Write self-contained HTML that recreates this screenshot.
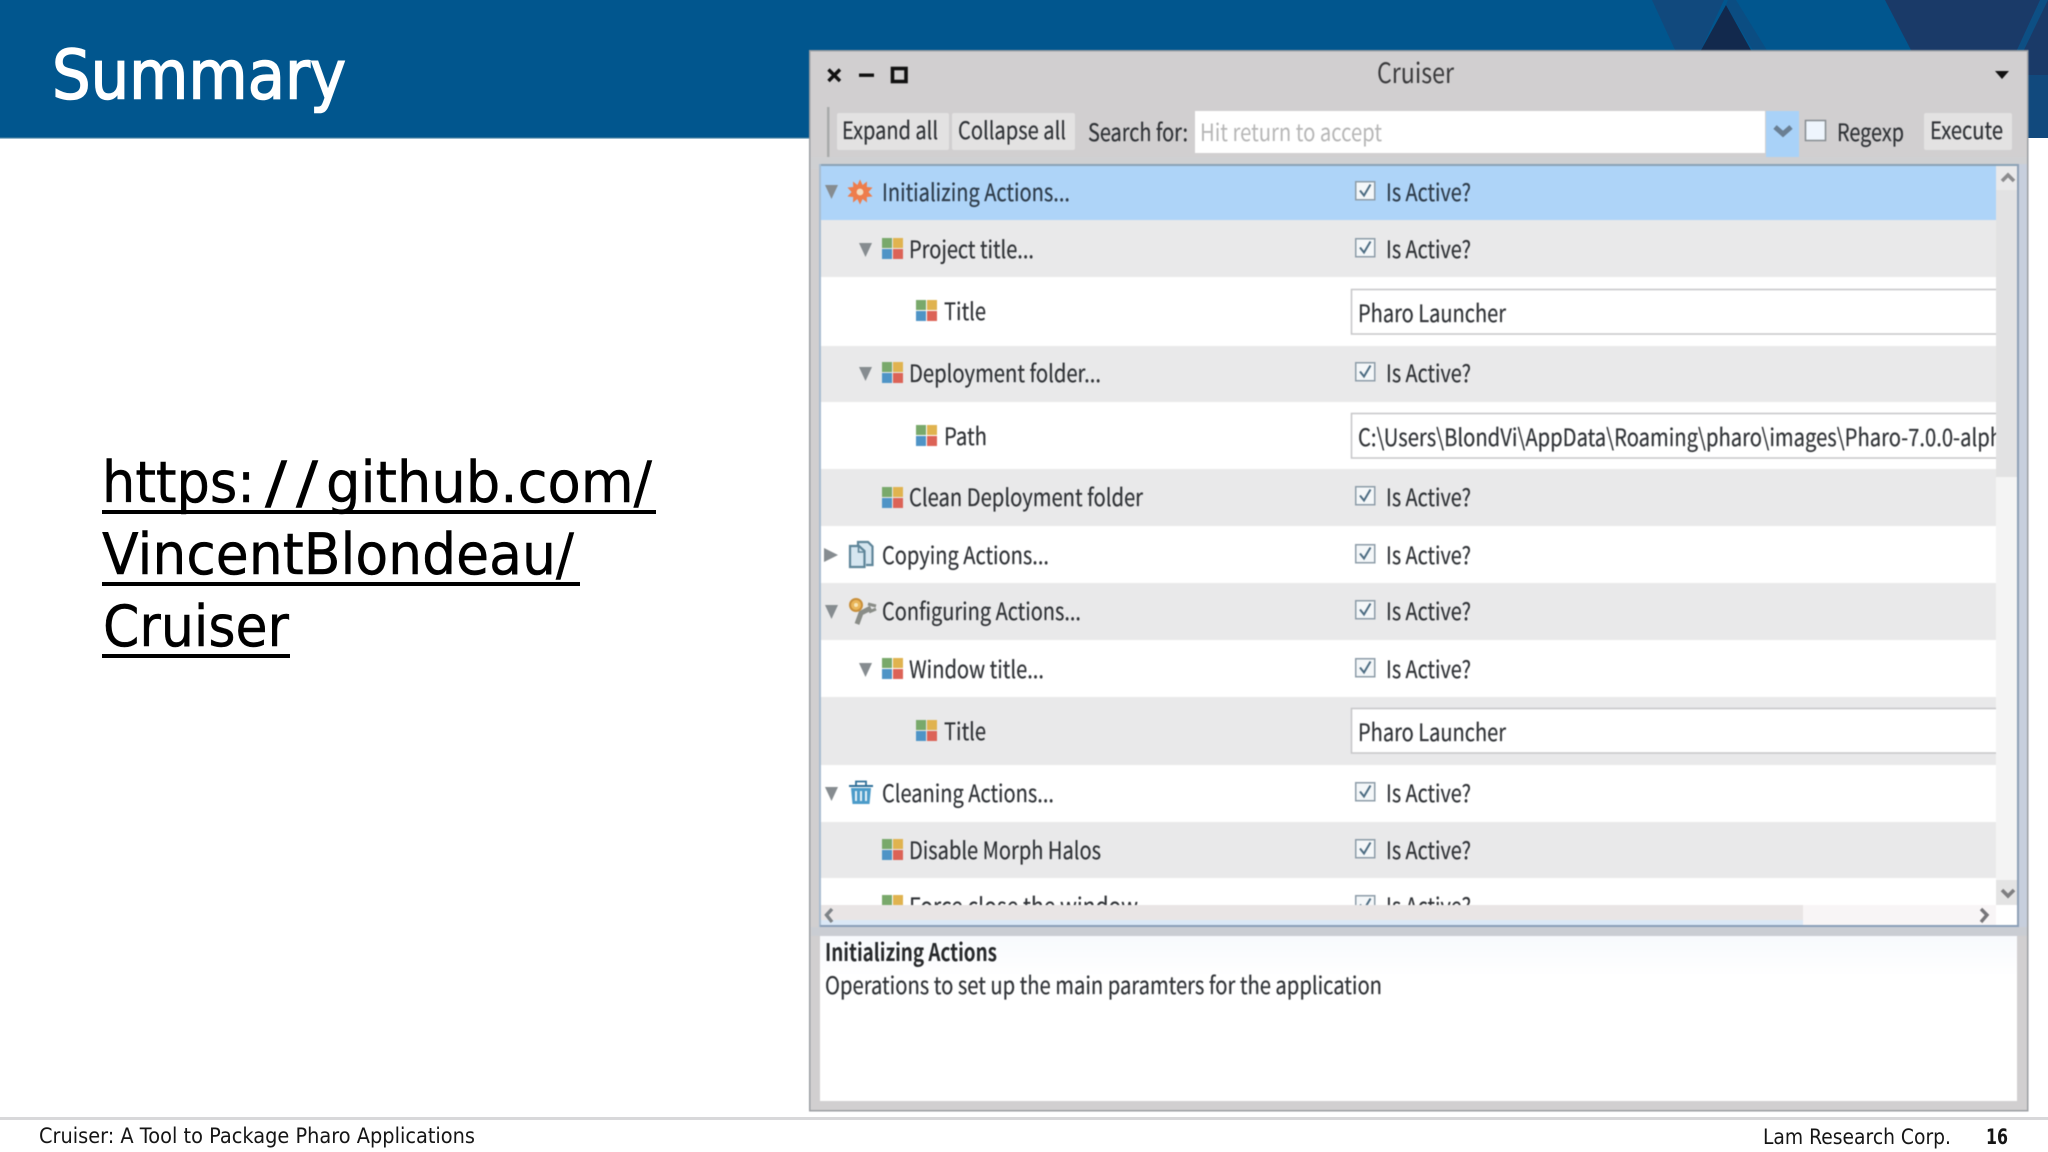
<!DOCTYPE html>
<html lang="en">
<head>
<meta charset="utf-8">
<title>Summary</title>
<style>
html,body{margin:0;padding:0;background:#fff;width:2048px;height:1152px;overflow:hidden}
svg{display:block;position:absolute;left:0;top:0}
text{font-family:"Liberation Sans",sans-serif;white-space:pre}
.d{font-family:"DejaVu Sans","Liberation Sans",sans-serif}
.t,.n{font-family:"Noto Sans CJK SC","Noto Sans CJK JP","Liberation Sans",sans-serif;transform:translateY(1px)}
.t{font-size:24px;fill:#2f3236;stroke:#2f3236;stroke-width:.2px}
.ui{filter:blur(.45px)}
</style>
</head>
<body>
<svg width="2048" height="1152" viewBox="0 0 2048 1152" xmlns="http://www.w3.org/2000/svg">
<defs>
<g id="grid">
<rect x="0" y="0" width="10" height="10" fill="#79a96b"/>
<rect x="11" y="0" width="10" height="10" fill="#e0b34f"/>
<rect x="0" y="11" width="10" height="10" fill="#4f94c6"/>
<rect x="11" y="11" width="10" height="10" fill="#dc6357"/>
</g>
<g id="chk">
<rect x=".75" y=".75" width="19" height="18" fill="#f4f7f9" stroke="#8d9ca8" stroke-width="1.5"/>
<path d="M5 9.5 L9 14.5 L15.5 3.5" fill="none" stroke="#4c6c82" stroke-width="2"/>
</g>
<path id="down" d="M0 0H13L6.5 14Z" fill="#868c90"/>
<clipPath id="treeclip"><rect x="820" y="166" width="1176" height="739"/></clipPath>
<linearGradient id="fade" x1="0" y1="0" x2="0" y2="1"><stop offset="0" stop-color="#f8fafd"/><stop offset="1" stop-color="#ffffff"/></linearGradient>
</defs>

<!-- header -->
<rect x="0" y="0" width="2048" height="138" fill="#01568e"/>
<rect x="0" y="137" width="810" height="1.5" fill="#2d7099"/>
<polygon points="1652,0 1724,0 1700,52 1676,52" fill="#11497d"/>
<polygon points="1726,5 1700,52 1752,52" fill="#12294d"/>
<polygon points="1728,0 1736,0 1768,52 1754,52 1726,5" fill="#0b4d82"/>
<polygon points="1885,0 2040,0 2016,52 1912,52" fill="#1a3a68"/>
<rect x="2016" y="0" width="32" height="75" fill="#1a3a68"/>
<polygon points="2040,0 2048,0 2023,52 2016,52" fill="#0d4f84"/>
<rect x="2028" y="75" width="20" height="63" fill="#11497d"/>

<text class="d" x="52" y="98.5" font-size="68" fill="#fff" stroke="#fff" stroke-width="1.6" textLength="294" lengthAdjust="spacingAndGlyphs">Summary</text>

<!-- link -->
<g fill="#000" stroke="#000" stroke-width=".5">
<text class="d" x="102" y="502" font-size="57" textLength="153" lengthAdjust="spacingAndGlyphs">https:</text>
<text class="d" x="265" y="502" font-size="57" textLength="22" lengthAdjust="spacingAndGlyphs">/</text>
<text class="d" x="296" y="502" font-size="57" textLength="22" lengthAdjust="spacingAndGlyphs">/</text>
<text class="d" x="326" y="502" font-size="57" textLength="326" lengthAdjust="spacingAndGlyphs">github.com/</text>
<rect x="102" y="510" width="554" height="4" stroke="none"/>
<text class="d" x="102" y="574" font-size="57" textLength="472" lengthAdjust="spacingAndGlyphs">VincentBlondeau/</text>
<rect x="102" y="582" width="478" height="4" stroke="none"/>
<text class="d" x="103" y="646" font-size="57" textLength="186" lengthAdjust="spacingAndGlyphs">Cruiser</text>
<rect x="102" y="654" width="188" height="4" stroke="none"/>
</g>

<!-- footer -->
<rect x="0" y="1117" width="2048" height="3" fill="#d8d8da"/>
<g fill="#151515" font-size="21">
<text class="d" x="39" y="1143" textLength="436" lengthAdjust="spacingAndGlyphs">Cruiser: A Tool to Package Pharo Applications</text>
<text class="d" x="1763" y="1144" textLength="188" lengthAdjust="spacingAndGlyphs">Lam Research Corp.</text>
<text class="d" x="1986" y="1144" font-weight="bold" textLength="22" lengthAdjust="spacingAndGlyphs">16</text>
</g>

<!-- window -->
<g class="ui">
<rect x="809.75" y="50.75" width="1218" height="1060" fill="#d1cfd0" stroke="#9c9fa3" stroke-width="1.5"/>

<!-- title bar -->
<path d="M828.5 69.5L840 81M840 69.5L828.5 81" stroke="#111" stroke-width="3.4" fill="none"/>
<rect x="859" y="73.5" width="15" height="3.4" fill="#111"/>
<rect x="892.5" y="68.5" width="13.5" height="13" fill="none" stroke="#111" stroke-width="3.6"/>
<text class="n" x="1377" y="82" font-size="28" fill="#3a3a3c" textLength="77" lengthAdjust="spacingAndGlyphs">Cruiser</text>
<path d="M1995 71H2009L2002 79Z" fill="#111"/>

<!-- toolbar -->
<rect x="827" y="107" width="2.5" height="50" fill="#a9abab"/>
<rect x="837" y="113" width="112" height="37" rx="2" fill="#e3e2e2"/>
<rect x="952" y="113" width="123" height="37" rx="2" fill="#e3e2e2"/>
<text class="t" x="842" y="138" textLength="96" lengthAdjust="spacingAndGlyphs">Expand all</text>
<text class="t" x="958" y="138" textLength="108" lengthAdjust="spacingAndGlyphs">Collapse all</text>
<text class="t" x="1088" y="140" textLength="100" lengthAdjust="spacingAndGlyphs">Search for:</text>
<rect x="1195" y="111" width="570" height="42" fill="#fff"/>
<text class="n" x="1200" y="140" font-size="24" fill="#b6b6b6" textLength="182" lengthAdjust="spacingAndGlyphs">Hit return to accept</text>
<rect x="1766" y="111" width="33" height="46" fill="#a9d2f8"/>
<path d="M1775 127L1783 134L1791 127" fill="none" stroke="#6a7f93" stroke-width="5"/>
<rect x="1805.5" y="120.5" width="20" height="20" fill="#eef5fd" stroke="#868c90" stroke-width="1.5"/>
<text class="t" x="1837" y="140" textLength="67" lengthAdjust="spacingAndGlyphs">Regexp</text>
<rect x="1924" y="113" width="88" height="37" rx="2" fill="#e3e2e2"/>
<text class="t" x="1930" y="138" textLength="73" lengthAdjust="spacingAndGlyphs">Execute</text>

<!-- tree frame -->
<rect x="811" y="157" width="1216" height="12" fill="#cfd0d2"/>
<rect x="820" y="166" width="1197" height="760" fill="#fff"/>
<rect x="819" y="164" width="1200" height="2" fill="#8aa2b6"/>
<rect x="819" y="164" width="2" height="763" fill="#a9bdd0"/>
<rect x="2017" y="164" width="2" height="763" fill="#8ea0b6"/>
<rect x="2019" y="164" width="8" height="772" fill="#c7cfdd"/>
<rect x="820" y="925" width="1199" height="2.5" fill="#8a9fb8"/>
<rect x="811" y="927" width="1216" height="9" fill="#cacdd3"/>

<!-- rows -->
<rect x="821" y="166" width="1175" height="54" fill="#aed4f8"/>
<g fill="#e9e9ea">
<rect x="821" y="220" width="1175" height="57"/>
<rect x="821" y="346" width="1175" height="56"/>
<rect x="821" y="469" width="1175" height="57"/>
<rect x="821" y="583" width="1175" height="57"/>
<rect x="821" y="697" width="1175" height="68"/>
<rect x="821" y="822" width="1175" height="56"/>
</g>

<!-- fields -->
<g fill="#fff" stroke="#c6c6c8" stroke-width="1.5">
<rect x="1351.5" y="289.5" width="660" height="44.5"/>
<rect x="1351.5" y="413.5" width="660" height="44.5"/>
<rect x="1351.5" y="708.5" width="660" height="44.5"/>
</g>

<g clip-path="url(#treeclip)">
<!-- triangles -->
<use href="#down" x="825" y="185"/>
<use href="#down" x="859" y="243"/>
<use href="#down" x="859" y="367"/>
<path d="M824 548L838 555L824 562Z" fill="#868c90"/>
<use href="#down" x="825" y="605"/>
<use href="#down" x="859" y="663"/>
<use href="#down" x="825" y="787"/>

<!-- gear icon -->
<g transform="translate(860 192)">
<path d="M0-12.5L2.6-7 7-10.5 6.8-5 12.5-4.5 8.5 0 12.5 4.5 6.8 5 7 10.5 2.6 7 0 12.5-2.6 7-7 10.5-6.8 5-12.5 4.5-8.5 0-12.5-4.5-6.8-5-7-10.5-2.6-7Z" fill="#ee7d4c"/>
<circle r="3.4" fill="#f3dcc0"/>
</g>

<!-- grid icons -->
<use href="#grid" x="882" y="238"/>
<use href="#grid" x="916" y="300"/>
<use href="#grid" x="882" y="362"/>
<use href="#grid" x="916" y="425"/>
<use href="#grid" x="882" y="487"/>
<use href="#grid" x="882" y="658"/>
<use href="#grid" x="916" y="720"/>
<use href="#grid" x="882" y="839"/>
<use href="#grid" x="882" y="895"/>

<!-- copy icon -->
<g fill="#d6e6f0" stroke="#5e8599" stroke-width="2.2">
<path d="M858 545V542H868L872.5 546.5V565H866"/>
<path d="M850 546H859L864.5 551V567H850Z"/>
</g>
<path d="M858.5 546V552H864.5" fill="none" stroke="#5e8599" stroke-width="1.6"/>

<!-- wrench icon -->
<g>
<path d="M857 624L861 613 871 608" fill="none" stroke="#8a8d88" stroke-width="5"/>
<path d="M868 604L876 606M869 612L876 609" stroke="#8a8d88" stroke-width="3" fill="none"/>
<circle cx="856" cy="605" r="6" fill="#e9b65a" stroke="#c98f3a" stroke-width="2"/>
<circle cx="856" cy="605" r="2" fill="#f8e6b8"/>
</g>

<!-- trash icon -->
<g>
<path d="M849 786H873" stroke="#2f6f98" stroke-width="2"/>
<path d="M856 785V781.5H866V785" fill="none" stroke="#2f6f98" stroke-width="1.8"/>
<path d="M851 788H871L869.5 804H852.5Z" fill="#4b9bc9"/>
<path d="M856 791V801M861 791V801M866 791V801" stroke="#e6f1f7" stroke-width="2"/>
</g>

<!-- labels -->
<text class="t" style="fill:#2c3c4c" x="882" y="200" textLength="188" lengthAdjust="spacingAndGlyphs">Initializing Actions...</text>
<text class="t" x="909" y="257" textLength="125" lengthAdjust="spacingAndGlyphs">Project title...</text>
<text class="t" x="944" y="319" textLength="42" lengthAdjust="spacingAndGlyphs">Title</text>
<text class="t" x="909" y="381" textLength="192" lengthAdjust="spacingAndGlyphs">Deployment folder...</text>
<text class="t" x="944" y="444" textLength="43" lengthAdjust="spacingAndGlyphs">Path</text>
<text class="t" x="909" y="505" textLength="234" lengthAdjust="spacingAndGlyphs">Clean Deployment folder</text>
<text class="t" x="882" y="563" textLength="167" lengthAdjust="spacingAndGlyphs">Copying Actions...</text>
<text class="t" x="882" y="619" textLength="199" lengthAdjust="spacingAndGlyphs">Configuring Actions...</text>
<text class="t" x="909" y="677" textLength="135" lengthAdjust="spacingAndGlyphs">Window title...</text>
<text class="t" x="944" y="739" textLength="42" lengthAdjust="spacingAndGlyphs">Title</text>
<text class="t" x="882" y="801" textLength="172" lengthAdjust="spacingAndGlyphs">Cleaning Actions...</text>
<text class="t" x="909" y="858" textLength="192" lengthAdjust="spacingAndGlyphs">Disable Morph Halos</text>
<text class="t" x="909" y="914" textLength="229" lengthAdjust="spacingAndGlyphs">Force close the window</text>

<!-- checks -->
<use href="#chk" x="1355" y="181"/>
<use href="#chk" x="1355" y="238"/>
<use href="#chk" x="1355" y="362"/>
<use href="#chk" x="1355" y="486"/>
<use href="#chk" x="1355" y="544"/>
<use href="#chk" x="1355" y="600"/>
<use href="#chk" x="1355" y="658"/>
<use href="#chk" x="1355" y="782"/>
<use href="#chk" x="1355" y="839"/>
<use href="#chk" x="1355" y="895"/>

<text class="t" style="fill:#2c3c4c" x="1386" y="200" textLength="85" lengthAdjust="spacingAndGlyphs">Is Active?</text>
<text class="t" x="1386" y="257" textLength="85" lengthAdjust="spacingAndGlyphs">Is Active?</text>
<text class="t" x="1386" y="381" textLength="85" lengthAdjust="spacingAndGlyphs">Is Active?</text>
<text class="t" x="1386" y="505" textLength="85" lengthAdjust="spacingAndGlyphs">Is Active?</text>
<text class="t" x="1386" y="563" textLength="85" lengthAdjust="spacingAndGlyphs">Is Active?</text>
<text class="t" x="1386" y="619" textLength="85" lengthAdjust="spacingAndGlyphs">Is Active?</text>
<text class="t" x="1386" y="677" textLength="85" lengthAdjust="spacingAndGlyphs">Is Active?</text>
<text class="t" x="1386" y="801" textLength="85" lengthAdjust="spacingAndGlyphs">Is Active?</text>
<text class="t" x="1386" y="858" textLength="85" lengthAdjust="spacingAndGlyphs">Is Active?</text>
<text class="t" x="1386" y="914" textLength="85" lengthAdjust="spacingAndGlyphs">Is Active?</text>

<text class="t" x="1358" y="321" textLength="148" lengthAdjust="spacingAndGlyphs">Pharo Launcher</text>
<text class="t" x="1358" y="445" textLength="644" lengthAdjust="spacingAndGlyphs">C:\Users\BlondVi\AppData\Roaming\pharo\images\Pharo-7.0.0-alph</text>
<text class="t" x="1358" y="740" textLength="148" lengthAdjust="spacingAndGlyphs">Pharo Launcher</text>
</g>

<!-- vertical scrollbar -->
<rect x="1996" y="166" width="21" height="311" fill="#e2e2e3"/>
<rect x="1996" y="477" width="21" height="403" fill="#f4f4f4"/>
<rect x="1996" y="880" width="21" height="25" fill="#e4e4e4"/>
<rect x="1996" y="166" width="21" height="24" fill="#e9e9ea"/>
<path d="M2002 181L2008 175L2014 181" fill="none" stroke="#8c8c8e" stroke-width="3.6"/>
<path d="M2002 890L2008 896L2014 890" fill="none" stroke="#7f7f81" stroke-width="3.6"/>

<!-- horizontal scrollbar -->
<rect x="821" y="905" width="982" height="15" fill="#e9e5e5"/>
<rect x="821" y="920" width="982" height="5" fill="#dbe8f6"/>
<rect x="1803" y="905" width="193" height="20" fill="#f8f5f6"/>
<path d="M832 909L826.5 915L832 922" fill="none" stroke="#7e8387" stroke-width="3.4"/>
<path d="M1981 909L1987 915L1981 922" fill="none" stroke="#77767a" stroke-width="3.4"/>

<!-- lower panel -->
<rect x="820" y="936" width="1197" height="165" fill="#fff"/>
<rect x="820" y="936" width="1197" height="40" fill="url(#fade)"/>
<text class="n" x="825" y="960" font-size="24" font-weight="bold" fill="#26282a" textLength="172" lengthAdjust="spacingAndGlyphs">Initializing Actions</text>
<text class="t" x="825" y="993" textLength="557" lengthAdjust="spacingAndGlyphs">Operations to set up the main paramters for the application</text>
</g>
</svg>
</body>
</html>
